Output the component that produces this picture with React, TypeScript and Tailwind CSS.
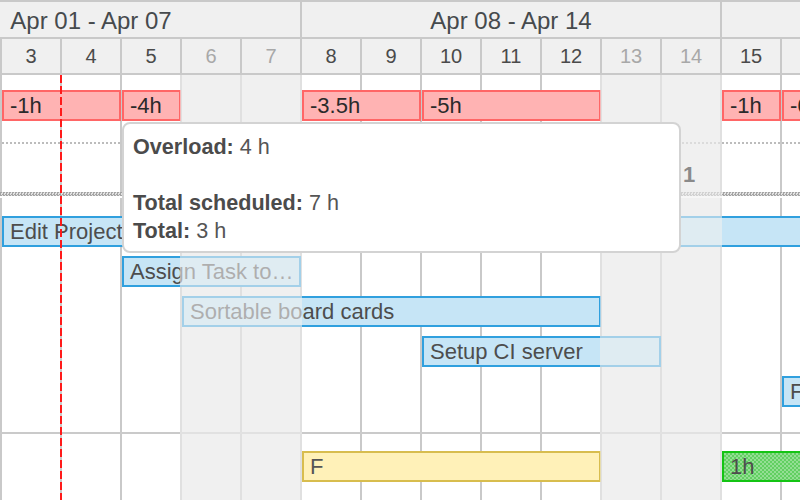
import React from 'react';

type Kind = 'over' | 'task' | 'note' | 'free';

type Bar = {
  day: number;
  span: number;
  top: number;
  label: string;
  kind: Kind;
};

// timeline is scrolled so that Apr 03 is the first visible day
const COL = 60;
const DAYS = Array.from({ length: 17 }, (_, i) => i + 1);
const WEEKS = ['Apr 01 - Apr 07', 'Apr 08 - Apr 14', 'Apr 15 - Apr 21'];
const isWeekend = (d: number) => d % 7 === 6 || d % 7 === 0;

const bars: Bar[] = [
  // resource overload row
  { day: 3, span: 2, top: 15, label: '-1h', kind: 'over' },
  { day: 5, span: 1, top: 15, label: '-4h', kind: 'over' },
  { day: 8, span: 2, top: 15, label: '-3.5h', kind: 'over' },
  { day: 10, span: 3, top: 15, label: '-5h', kind: 'over' },
  { day: 15, span: 1, top: 15, label: '-1h', kind: 'over' },
  { day: 16, span: 1, top: 15, label: '-6h', kind: 'over' },
  // tasks
  { day: 3, span: 14, top: 141, label: 'Edit Project plan', kind: 'task' },
  { day: 5, span: 3, top: 181, label: 'Assign Task to…', kind: 'task' },
  { day: 6, span: 7, top: 221, label: 'Sortable board cards', kind: 'task' },
  { day: 10, span: 4, top: 261, label: 'Setup CI server', kind: 'task' },
  { day: 16, span: 3, top: 301, label: 'Fix bugs', kind: 'task' },
  // bottom row
  { day: 8, span: 5, top: 376, label: 'F', kind: 'note' },
  { day: 15, span: 3, top: 376, label: '1h', kind: 'free' },
];

const kindClass: Record<Kind, string> = {
  over: 'bg-[#ffb3b3] border-[#ff6666] text-[#2a2a2a]',
  task: 'bg-[#c6e5f6] border-[#30a0de] text-[#4d4d4d]',
  note: 'bg-[#fff1b8] border-[#d8bd4e] text-[#555555]',
  free: 'bg-[repeating-conic-gradient(#62cf62_0_25%,#93df93_0_50%)] bg-[length:4px_4px] border-[#14c414] text-[#4d4d4d]',
};

const App = () => {
  return (
    <div className="relative w-[800px] h-[500px] overflow-hidden bg-white font-['Liberation_Sans',Arial,sans-serif]">
      <div className="ml-[-118px] w-[1200px] flex flex-col">
        {/* week header */}
        <div className="flex h-[39px] box-border border-y-2 border-[#c9c9c9] bg-[#f0f0f0]">
          {WEEKS.map((w) => (
            <div
              key={w}
              className="w-[420px] shrink-0 box-border border-r-2 border-[#c9c9c9] flex items-center justify-center pt-[3px] text-[24px] text-[#464a4d]"
            >
              {w}
            </div>
          ))}
        </div>

        {/* day header */}
        <div className="flex h-[36px] box-border border-b-2 border-[#c9c9c9] bg-[#f0f0f0]">
          {DAYS.map((d) => (
            <div
              key={d}
              className={`w-[60px] shrink-0 box-border border-r-2 border-[#c9c9c9] flex items-center justify-center text-[20px] ${
                isWeekend(d) ? 'text-[#a8a8a8]' : 'text-[#4a4a4a]'
              }`}
            >
              {d}
            </div>
          ))}
        </div>

        {/* body */}
        <div className="relative h-[425px]">
          <div className="absolute inset-0 flex">
            {DAYS.map((d) => (
              <div
                key={d}
                className={`w-[60px] shrink-0 box-border border-r-2 border-[#c9c9c9] ${isWeekend(d) ? 'bg-[#f0f0f0]' : ''}`}
              />
            ))}
          </div>

          <div className="relative flex flex-col">
            <div className="h-[67px]" />
            <div className="h-[2px] bg-[repeating-linear-gradient(90deg,#bcbcbc_0_2px,transparent_2px_4px)]" />
            <div className="h-[48px]" />
            <div className="h-[4px] bg-[repeating-conic-gradient(#a4a4a4_0_25%,#e2e2e2_0_50%)] bg-[length:3px_3px]" />
            <div className="h-[2px] bg-white" />
            <div className="h-[236px] box-border border-b-2 border-[#cacaca]" />
          </div>

          {bars.map((b, i) => (
            <div
              key={i}
              className={`absolute box-border h-[31px] border-2 pl-[6px] text-[22px] leading-[27px] whitespace-nowrap overflow-hidden ${kindClass[b.kind]}`}
              style={{ left: COL * (b.day - 1), width: COL * b.span - 1, top: b.top }}
            >
              {b.label}
            </div>
          ))}

          {/* non-working time shades the bars */}
          <div className="absolute top-0 bottom-0 left-[298px] w-[122px] bg-[#f0f0f0]/60" />
          <div className="absolute top-0 bottom-0 left-[718px] w-[122px] bg-[#f0f0f0]/60" />

          <div className="absolute left-[801px] top-[83px] text-[22px] font-bold text-[#8a8a8a]">1</div>

          {/* current time */}
          <div className="absolute top-0 bottom-0 left-[178px] w-[2px] bg-[repeating-linear-gradient(to_bottom,#ff1a1a_0_8px,transparent_8px_11px)]" />
        </div>
      </div>

      {/* tooltip */}
      <div className="absolute left-[122px] top-[122px] w-[559px] h-[131px] box-border bg-white border-2 border-[#d3d3d3] rounded-[8px] pl-[9px] pt-[9px] text-[21.6px] leading-[28px] text-[#555555]">
        <div>
          <span className="font-bold text-[#4b4b4b]">Overload:</span> 4 h
        </div>
        <div className="h-[28px]" />
        <div>
          <span className="font-bold text-[#4b4b4b]">Total scheduled:</span> 7 h
        </div>
        <div>
          <span className="font-bold text-[#4b4b4b]">Total:</span> 3 h
        </div>
      </div>
    </div>
  );
};

export default App;
